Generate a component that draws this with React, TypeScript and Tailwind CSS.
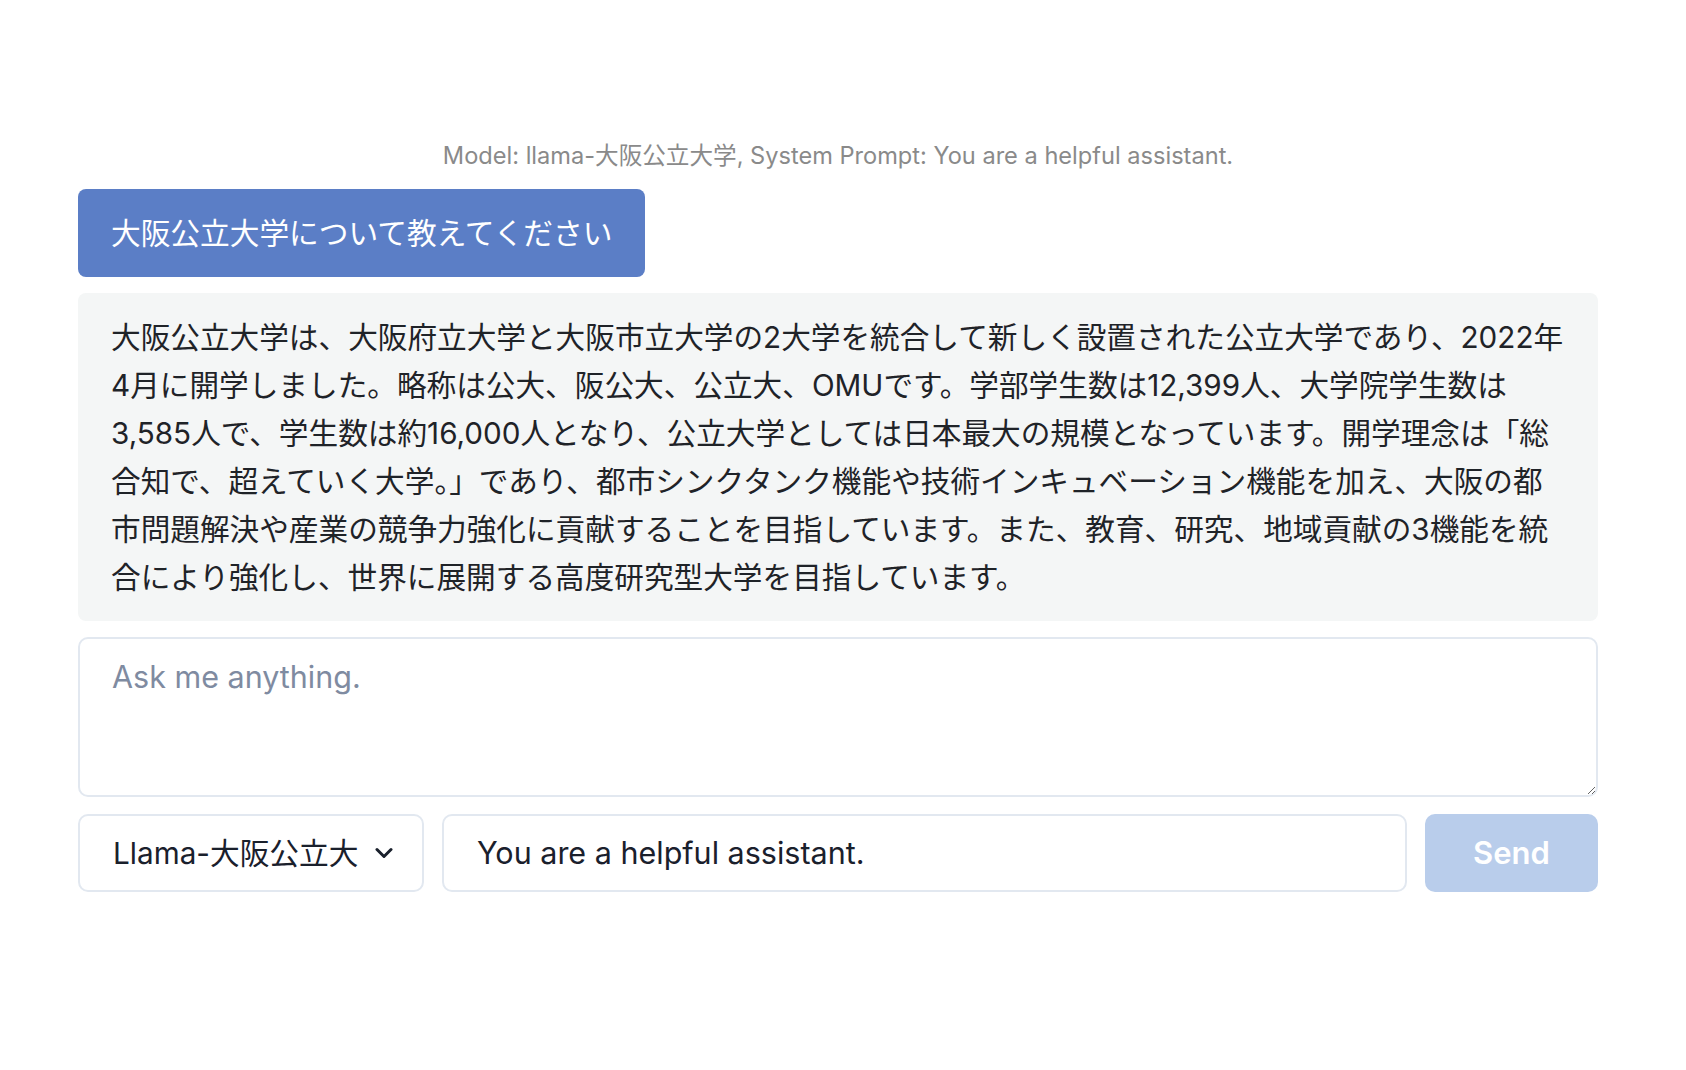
const answerLines = [
  "大阪公立大学は、大阪府立大学と大阪市立大学の2大学を統合して新しく設置された公立大学であり、2022年",
  "4月に開学しました。略称は公大、阪公大、公立大、OMUです。学部学生数は12,399人、大学院学生数は",
  "3,585人で、学生数は約16,000人となり、公立大学としては日本最大の規模となっています。開学理念は「総",
  "合知で、超えていく大学。」であり、都市シンクタンク機能や技術インキュベーション機能を加え、大阪の都",
  "市問題解決や産業の競争力強化に貢献することを目指しています。また、教育、研究、地域貢献の3機能を統",
  "合により強化し、世界に展開する高度研究型大学を目指しています。",
];

function Chevron() {
  return (
    <svg width="18" height="12" viewBox="0 0 18 12" fill="none" className="text-[#1a202c]">
      <path d="M2 2.5 9 9.5 16 2.5" stroke="currentColor" strokeWidth="3" strokeLinecap="round" strokeLinejoin="round" />
    </svg>
  );
}

export default function App() {
  return (
    <div className="min-h-screen bg-white pt-[141px] font-['Inter','Noto_Sans_CJK_JP',sans-serif] text-[#1a202c]">
      <div className="ml-[78px] w-[1520px]">
        {/* header info */}
        <p className="text-center text-[23.6px] leading-[30px] text-[#8a8a8a]">
          Model: llama-大阪公立大学, System Prompt: You are a helpful assistant.
        </p>

        {/* user message */}
        <div className="mt-[18px] flex">
          <div className="rounded-lg bg-[#5b7ec6] px-[33px] py-6 text-[29.7px] leading-[40px] text-white">
            大阪公立大学について教えてください
          </div>
        </div>

        {/* assistant message */}
        <div className="mt-4 rounded-lg bg-[#f4f6f6] px-[33px] pt-5 pb-5 text-[29.65px] leading-[48px] text-[#1f2328]">
          {answerLines.map((line, i) => (
            <span key={i} className="block whitespace-nowrap">
              {line}
            </span>
          ))}
        </div>

        {/* input */}
        <textarea
          placeholder="Ask me anything."
          className="mt-4 block h-[160px] w-full rounded-[10px] border-2 border-[#e2e8f0] px-8 py-[17px] text-[30.5px] leading-[42px] outline-none placeholder:text-[#7f8ba1]"
        />

        <div className="mt-[17px] flex h-[78px] gap-[18px]">
          <div className="flex w-[346px] shrink-0 items-center gap-[17px] rounded-[10px] border-2 border-[#e2e8f0] pl-[33px] text-[29.7px]">
            <span>Llama-大阪公立大</span>
            <Chevron />
          </div>
          <div className="flex flex-1 items-center rounded-[10px] border-2 border-[#e2e8f0] pl-[33px] text-[30.5px]">
            You are a helpful assistant.
          </div>
          <button className="w-[173px] shrink-0 rounded-[10px] bg-[#b9cdeb] text-[31px] font-semibold text-white">
            Send
          </button>
        </div>
      </div>
    </div>
  );
}
